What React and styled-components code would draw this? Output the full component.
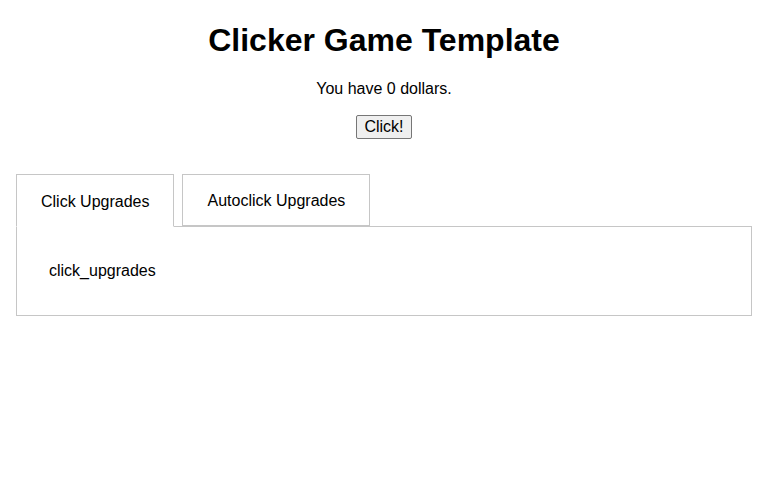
import React, { useState } from "react";
import styled, { createGlobalStyle } from "styled-components";

const GlobalStyle = createGlobalStyle`
  html, body {
    margin: 0;
    padding: 0;
    background: #ffffff;
  }
  body {
    font-family: "Liberation Sans", Arial, sans-serif;
    color: #000000;
  }
`;

const Page = styled.div`
  padding: 0 16px;
`;

const Title = styled.h1`
  margin: 22px 0 0;
  font-size: 32px;
  font-weight: bold;
  line-height: 37px;
  text-align: center;
`;

const Balance = styled.p`
  margin: 21px 0 0;
  font-size: 16px;
  line-height: 18px;
  text-align: center;
`;

const ClickButton = styled.button`
  display: block;
  margin: 17px auto 0;
  height: 24px;
  padding: 0 7px;
  font-family: "Liberation Sans", Arial, sans-serif;
  font-size: 16px;
  line-height: 20px;
  color: #000;
  background: #efefef;
  border: 1px solid #767676;
  border-radius: 2px;
  cursor: pointer;
`;

const Tabs = styled.div`
  margin-top: 35px;
`;

const TabList = styled.div`
  display: flex;
  gap: 8px;
  align-items: flex-start;
`;

const Tab = styled.button`
  height: ${(p) => (p.$active ? "53px" : "52px")};
  margin-bottom: ${(p) => (p.$active ? "-1px" : "0")};
  padding: 2px 24px 0;
  font-family: "Liberation Sans", Arial, sans-serif;
  font-size: 16px;
  color: #000;
  background: #ffffff;
  border: 1px solid #c6c6c6;
  border-bottom-color: ${(p) => (p.$active ? "#ffffff" : "#c6c6c6")};
  position: relative;
  z-index: ${(p) => (p.$active ? 1 : 0)};
  cursor: pointer;
`;

const Panel = styled.div`
  border: 1px solid #c6c6c6;
  padding: 35px 32px 35px;
  font-size: 16px;
  line-height: 18px;
`;

const tabs = [
  { id: "click", label: "Click Upgrades", body: "click_upgrades" },
  { id: "auto", label: "Autoclick Upgrades", body: "autoclick_upgrades" },
];

export default function App() {
  const [dollars, setDollars] = useState(0);
  const [active, setActive] = useState("click");
  const current = tabs.find((t) => t.id === active);

  return (
    <Page>
      <GlobalStyle />
      <Title>Clicker Game Template</Title>
      <Balance>You have {dollars} dollars.</Balance>
      <ClickButton onClick={() => setDollars((d) => d + 1)}>Click!</ClickButton>
      <Tabs>
        <TabList>
          {tabs.map((t) => (
            <Tab key={t.id} $active={t.id === active} onClick={() => setActive(t.id)}>
              {t.label}
            </Tab>
          ))}
        </TabList>
        <Panel>{current.body}</Panel>
      </Tabs>
    </Page>
  );
}
